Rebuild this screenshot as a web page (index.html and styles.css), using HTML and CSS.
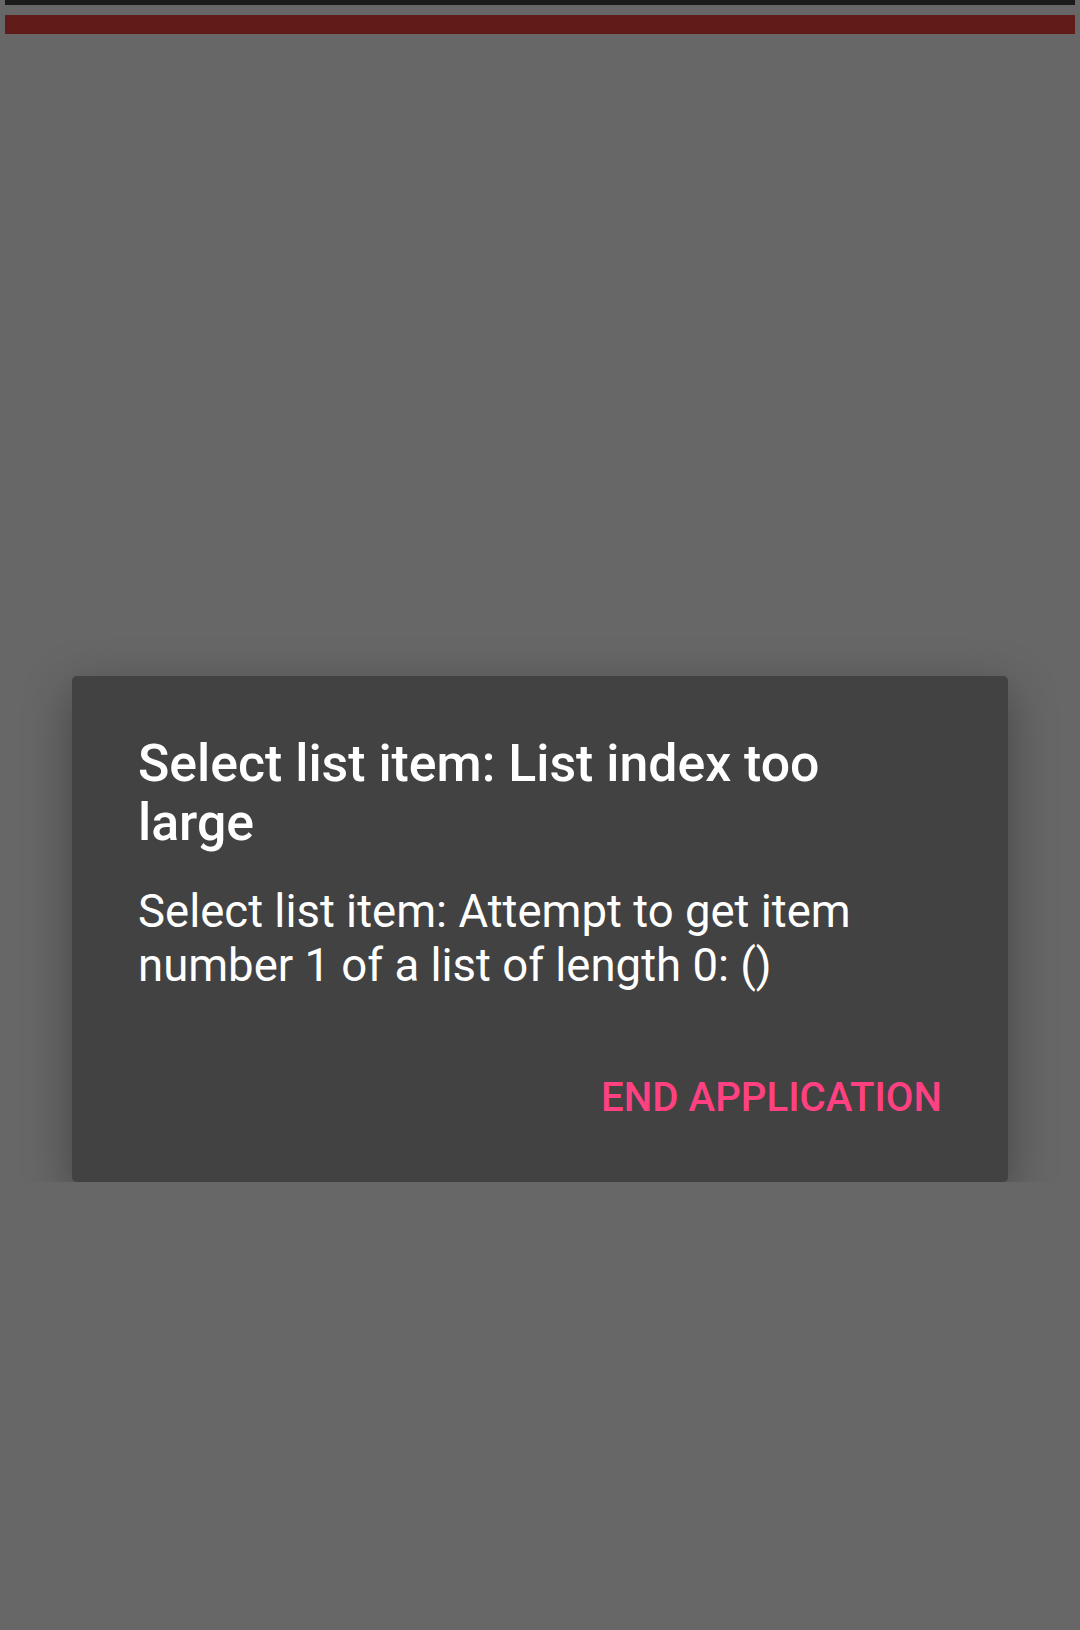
FILE: index.html
```html
<!DOCTYPE html>
<html lang="en">
<head>
    <meta charset="UTF-8">
    <meta name="viewport" content="width=device-width, initial-scale=1.0">
    <title>Select list item</title>
    <link rel="stylesheet" href="styles.css">
</head>
<body>
    <div class="status-bar"></div>
    <div class="title-bar"></div>

    <div class="dialog">
        <h2 class="dialog-title">Select list item: List index too large</h2>
        <p class="dialog-message">Select list item: Attempt to get item number 1 of a list of length 0: ()</p>
        <div class="dialog-buttons">
            <button class="dialog-button">END APPLICATION</button>
        </div>
    </div>
</body>
</html>
```

FILE: styles.css
```css
body {
    margin: 0;
    background-color: #676767;
    font-family: Roboto, "Noto Sans", sans-serif;
    color: white;
}
.status-bar {
    height: 5px;
    margin: 0 5px;
    background-color: #1b1b1b;
}
.title-bar {
    height: 19px;
    margin: 10px 5px 0;
    background-color: #611b19;
}
.dialog {
    width: 936px;
    margin: 642px auto 0;
    padding: 58px 0 60px;
    box-sizing: border-box;
    background-color: #424242;
    border-radius: 5px;
    box-shadow: 0 14px 48px rgba(0, 0, 0, 0.35);
}
.dialog-title {
    margin: 0;
    padding: 0 66px;
    font-size: 51.8px;
    font-weight: 500;
    line-height: 59px;
}
.dialog-message {
    margin: 33px 0 0;
    padding: 0 66px;
    font-size: 45.5px;
    line-height: 54px;
}
.dialog-buttons {
    margin-top: 81px;
    padding-right: 66px;
    text-align: right;
}
.dialog-button {
    margin: 0;
    padding: 0;
    border: none;
    background: none;
    color: #ff4081;
    font-family: Roboto, "Noto Sans", sans-serif;
    font-size: 40.2px;
    font-weight: 500;
    line-height: 48px;
    cursor: pointer;
}
```
